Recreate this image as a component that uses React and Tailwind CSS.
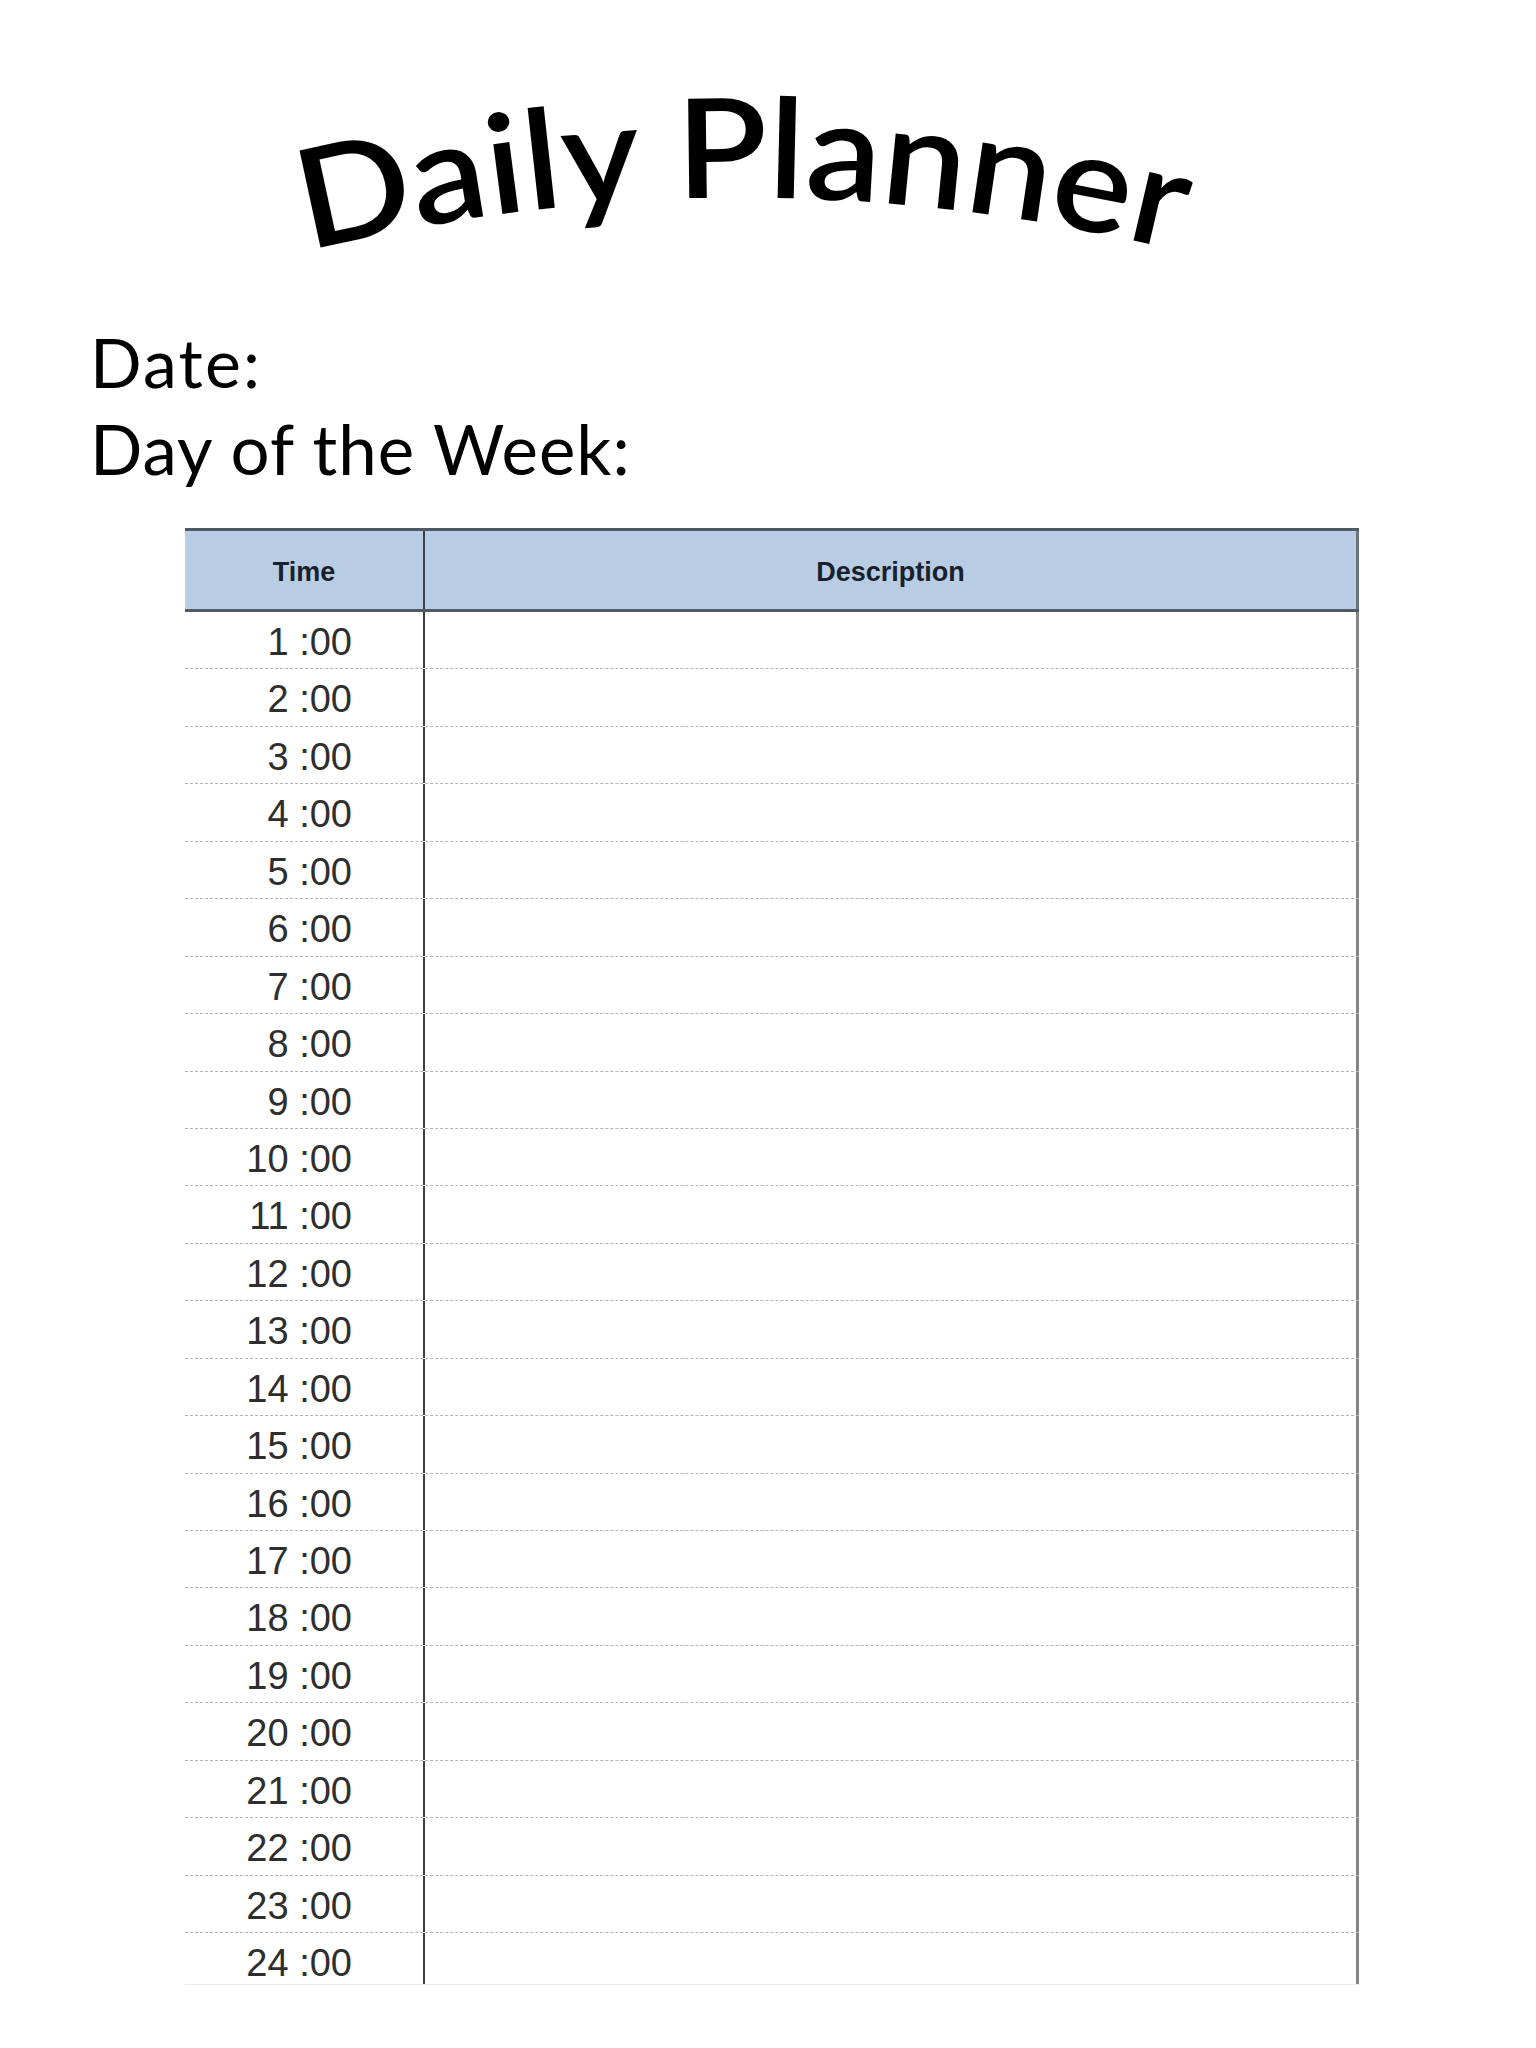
import React from 'react';

const HOURS = Array.from({ length: 24 }, (_, i) => i + 1);

// Arched title, drawn as real text on a circular path
function CurvedTitle() {
  return (
    <svg width="1536" height="318" viewBox="0 0 1536 318" className="block">
      <defs>
        <path id="title-arc" d="M 218 276 A 1800 1800 0 0 1 1268 276" fill="none" />
      </defs>
      <text
        fill="#000"
        fontSize="138"
        fontWeight="600"
        style={{ fontFamily: 'Lato, "Noto Sans", sans-serif' }}
      >
        <textPath
          href="#title-arc"
          startOffset="50%"
          textAnchor="middle"
          textLength="878"
          lengthAdjust="spacingAndGlyphs"
        >
          Daily Planner
        </textPath>
      </text>
    </svg>
  );
}

function HeaderRow() {
  return (
    <div className="flex h-[84px] bg-[#b8cce4] border-t-[3px] border-b-[3px] border-[#4f5963] font-['Liberation_Sans',Arial,sans-serif] font-bold text-[27px] text-[#18212b]">
      <div className="w-[240px] flex items-center justify-center pt-[4px] border-r-2 border-[#3a3f44]">
        Time
      </div>
      <div className="flex-1 flex items-center justify-center pt-[4px] border-r-[3px] border-[#6c737a]">
        Description
      </div>
    </div>
  );
}

function HourRow({ hour, last }) {
  return (
    <div
      className={`flex ${last ? 'h-[52px] border-b border-[#ededed]' : 'h-[57.45px] border-b border-dashed border-[#b4b4b4]'}`}
    >
      <div className="w-[240px] text-right pr-[71px] pt-[4px] leading-[52px] border-r-2 border-[#3f3f3f] text-[38px] text-[#2e2e2e] font-['Liberation_Sans',Arial,sans-serif]">
        {hour} :00
      </div>
      <div className="flex-1 border-r-[3px] border-[#858585]" />
    </div>
  );
}

export default function App() {
  return (
    <div className="w-[1536px] h-[2048px] bg-white overflow-hidden">
      <CurvedTitle />

      <div className="pl-[90px] font-['Lato','Noto_Sans',sans-serif] text-black leading-[87px]">
        <p className="text-[68px] tracking-[2.2px]">Date:</p>
        <p className="text-[69px] tracking-[1px]">Day of the Week:</p>
      </div>

      <div className="ml-[185px] w-[1174px] mt-[36px]">
        <HeaderRow />
        {HOURS.map((h) => (
          <HourRow key={h} hour={h} last={h === 24} />
        ))}
      </div>
    </div>
  );
}
